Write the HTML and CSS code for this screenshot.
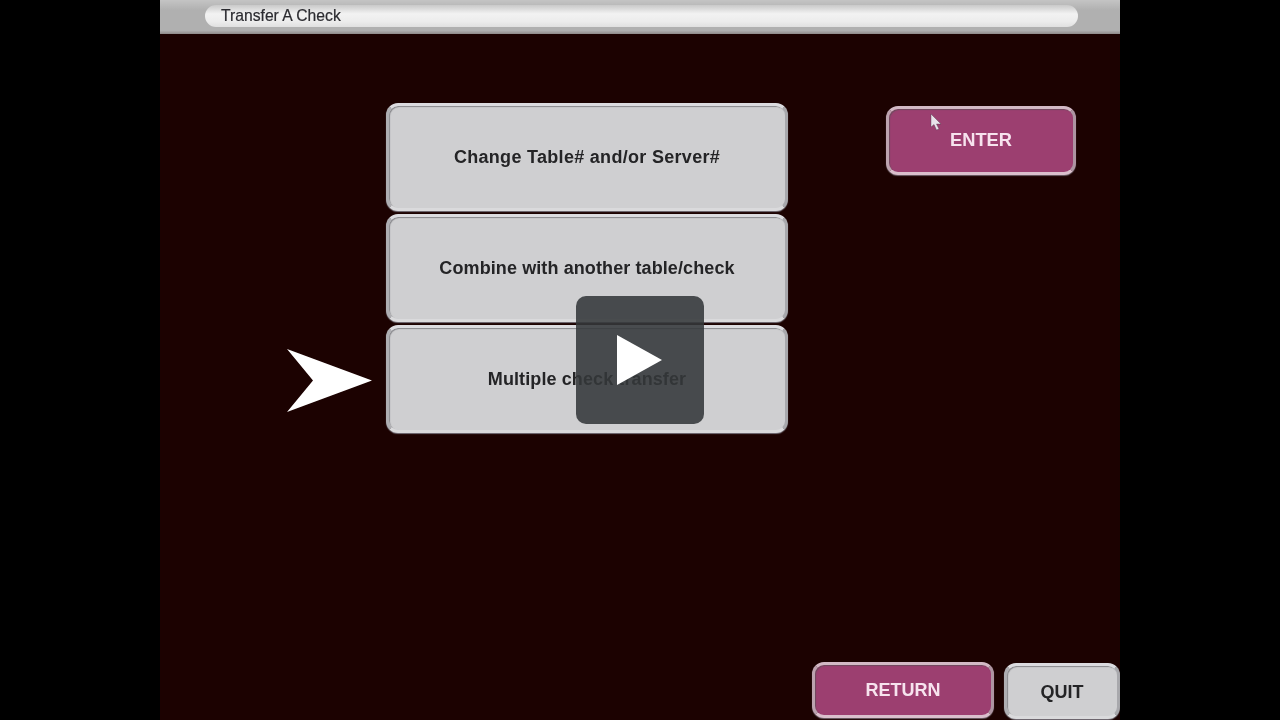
FILE: index.html
```html
<!DOCTYPE html>
<html lang="en">
<head>
<meta charset="utf-8">
<title>Transfer A Check</title>
<link rel="stylesheet" href="styles.css">
</head>
<body>
<div class="player">
  <main class="screen">
    <header class="titlebar">
      <div class="title-pill">Transfer A Check</div>
    </header>
    <section class="workspace">
      <div class="options">
        <div class="option-row">
          <span class="arrow-slot"></span>
          <button class="btn btn-grey option option-wide">Change Table# and/or Server#</button>
        </div>
        <div class="option-row">
          <span class="arrow-slot"></span>
          <button class="btn btn-grey option">Combine with another table/check</button>
        </div>
        <div class="option-row">
          <span class="arrow-slot">
            <svg class="arrow" viewBox="0 0 86 64" aria-hidden="true"><polygon points="0,0 85,31.5 0,63 26,31.5"/></svg>
          </span>
          <button class="btn btn-grey option">Multiple check transfer</button>
        </div>
      </div>
      <div class="enter-col">
        <button class="btn btn-plum enter">ENTER</button>
        <svg class="cursor" viewBox="0 0 12 17" aria-hidden="true"><polygon points="1,0 1,13 4,10.5 6.5,16 9,15 6.5,10 11,10"/></svg>
      </div>
    </section>
    <footer class="footer">
      <button class="btn btn-plum return">RETURN</button>
      <button class="btn btn-grey quit">QUIT</button>
    </footer>
  </main>
  <div class="play-overlay">
    <svg class="play-icon" viewBox="0 0 128 128" aria-hidden="true"><polygon points="41,39 86,64 41,89"/></svg>
  </div>
</div>
</body>
</html>
```

FILE: styles.css
```css
* { box-sizing: border-box; }

html, body {
  margin: 0;
  height: 100%;
  background: #000;
}

body {
  font-family: "Liberation Sans", Arial, sans-serif;
  overflow: hidden;
}

.player {
  position: relative;
  width: 1280px;
  height: 720px;
  display: flex;
  justify-content: center;
}

.screen {
  width: 960px;
  height: 720px;
  background: #1c0201;
  display: flex;
  flex-direction: column;
  overflow: hidden;
  filter: blur(0.5px);
}

.titlebar {
  height: 34px;
  flex: none;
  padding: 5px 42px 7px 45px;
  background: linear-gradient(180deg, #c4c4c4 0%, #b0b0b0 30%, #b0b0b0 90%, #8f8a8a 100%);
  display: flex;
}

.title-pill {
  flex: 1;
  height: 22px;
  padding-left: 16px;
  border-radius: 11px;
  background: linear-gradient(180deg, #c9c9c9 0%, #f2f2f2 40%, #ececec 75%, #e0e0e0 100%);
  color: #2b2b30;
  font-size: 15.7px;
  line-height: 21px;
  -webkit-text-stroke: 0.2px #2b2b30;
}

.workspace {
  flex: 1;
  display: flex;
  padding: 69px 0 0 127px;
}

.options {
  display: flex;
  flex-direction: column;
  gap: 3px;
}

.option-row {
  display: flex;
  align-items: center;
  height: 108px;
}

.arrow-slot {
  width: 99px;
  flex: none;
  display: flex;
  padding-top: 4px;
}

.arrow {
  width: 86px;
  height: 64px;
  display: block;
  fill: #fff;
}

.btn {
  font-family: inherit;
  font-weight: 700;
  padding: 0;
  border-style: solid;
  border-width: 3px;
}

.btn-grey {
  background: #cfcfd1;
  color: #242426;
  border-color: #dcdce0 #a8a8ac #dadadc #aeaeb2;
  box-shadow: inset 1px 1px 1px #88888c, 0 1px 1px #77727a;
}

.btn-plum {
  background: #9c3f70;
  color: #f7e3ee;
  border-color: #d2b9c5 #ae95a2 #dabfcc #bca3af;
  box-shadow: inset 1px 1px 1px #6f4a5e, 0 1px 1px #6e6068;
}

.option {
  width: 402px;
  height: 108px;
  border-radius: 12px;
  font-size: 18px;
  letter-spacing: 0.1px;
  padding-top: 1px;
}

.option-wide {
  letter-spacing: 0.3px;
}

.enter-col {
  position: relative;
  padding: 3px 0 0 98px;
}

.enter {
  width: 190px;
  height: 69px;
  border-radius: 12px;
  font-size: 18.3px;
  padding-bottom: 1px;
}

.cursor {
  position: absolute;
  left: 142px;
  top: 11px;
  width: 12px;
  height: 17px;
  fill: #e9e2ea;
  stroke: #4c3a48;
  stroke-width: 0.4;
}

.footer {
  flex: none;
  height: 58px;
  display: flex;
  justify-content: flex-end;
  align-items: flex-start;
  gap: 10px;
}

.return {
  width: 182px;
  height: 56px;
  border-radius: 12px;
  font-size: 18px;
  padding-top: 1px;
}

.quit {
  width: 116px;
  height: 56px;
  margin-top: 1px;
  border-radius: 12px;
  font-size: 18px;
  padding-top: 2px;
}

.play-overlay {
  position: absolute;
  left: 576px;
  top: 296px;
  width: 128px;
  height: 128px;
  border-radius: 10px;
  background: rgba(52, 56, 58, 0.88);
}

.play-icon {
  display: block;
  width: 128px;
  height: 128px;
  fill: #fff;
}
```
